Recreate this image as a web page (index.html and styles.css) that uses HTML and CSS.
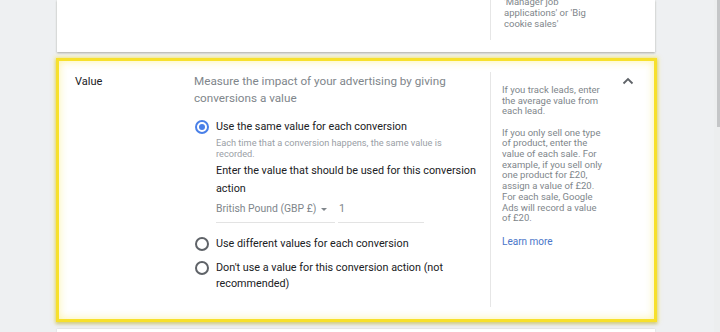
FILE: index.html
```html
<!DOCTYPE html>
<html>
<head>
<meta charset="utf-8">
<link rel="stylesheet" href="styles.css">
</head>
<body>
<div class="page">
  <div class="content">
    <div class="card top-card">
      <div class="top-main"></div>
      <div class="top-help">
        <p>'Manager job<br>applications' or 'Big<br>cookie sales'</p>
      </div>
    </div>
    <div class="card value-card">
      <div class="label">Value</div>
      <div class="main">
        <p class="desc">Measure the impact of your advertising by giving<br>conversions a value</p>
        <div class="option opt1">
          <span class="radio checked"></span>
          <span class="opt-label">Use the same value for each conversion</span>
        </div>
        <div class="indent">
          <p class="sub">Each time that a conversion happens, the same value is<br>recorded.</p>
          <p class="enter">Enter the value that should be used for this conversion<br>action</p>
          <div class="inputs">
            <div class="select">
              <span>British Pound (GBP £)</span>
              <span class="caret"></span>
            </div>
            <div class="amount">1</div>
          </div>
        </div>
        <div class="option opt2">
          <span class="radio"></span>
          <span class="opt-label">Use different values for each conversion</span>
        </div>
        <div class="option opt3">
          <span class="radio"></span>
          <span class="opt-label">Don't use a value for this conversion action (not<br>recommended)</span>
        </div>
      </div>
      <div class="help">
        <p>If you track leads, enter<br>the average value from<br>each lead.</p>
        <p class="p2">If you only sell one type<br>of product, enter the<br>value of each sale. For<br>example, if you sell only<br>one product for £20,<br>assign a value of £20.<br>For each sale, Google<br>Ads will record a value<br>of £20.</p>
        <a class="learn">Learn more</a>
      </div>
      <div class="toggle">
        <svg width="12" height="8" viewBox="0 0 12 8"><path d="M1.5 6.5 L6 2 L10.5 6.5" fill="none" stroke="#5f6368" stroke-width="1.8"/></svg>
      </div>
    </div>
    <div class="card next-card"></div>
  </div>
  <div class="scrollbar"><div class="thumb"></div></div>
</div>
</body>
</html>
```

FILE: styles.css
```css
html, body {
  margin: 0;
  padding: 0;
  height: 100%;
  overflow: hidden;
}
body {
  background: #eef0f2;
  font-family: Roboto, "Liberation Sans", Arial, sans-serif;
  color: #3c4043;
}
p { margin: 0; white-space: nowrap; }
.page {
  display: flex;
  height: 332px;
  overflow: hidden;
}
.content {
  flex: 1;
  padding-left: 57px;
  padding-right: 57px;
  display: flex;
  flex-direction: column;
}
.card {
  background: #fff;
  width: 598px;
  flex: none;
}
.top-card {
  height: 52px;
  display: flex;
  box-shadow: 0 1px 2px rgba(90, 90, 70, 0.45);
  overflow: hidden;
}
.top-main { width: 433px; }
.top-help {
  border-left: 1px solid #e6e6e6;
  margin-bottom: 12px;
  padding-left: 13px;
  padding-bottom: 11px;
  display: flex;
  flex-direction: column;
  justify-content: flex-end;
  font-size: 9.5px;
  line-height: 11px;
  color: #80868b;
}
.value-card {
  margin-top: 6px;
  margin-left: -1px;
  width: 595px;
  border: 3px solid #f7e02c;
  box-shadow: 0 0 4px 1px rgba(250, 228, 40, 0.55), inset 0 0 9px rgba(250, 232, 80, 0.5), 0 2px 3px rgba(60, 60, 0, 0.25);
  display: flex;
  height: 258px;
}
.label {
  width: 119px;
  flex: none;
  padding-left: 16px;
  padding-top: 12px;
  font-size: 11px;
  line-height: 17px;
  color: #202124;
}
.main {
  width: 296px;
  flex: none;
  padding-top: 12px;
  font-size: 10.8px;
}
.desc {
  font-size: 11.7px;
  line-height: 17px;
  color: #80868b;
}
.option {
  display: flex;
  align-items: flex-start;
  padding-left: 1px;
}
.opt1 { margin-top: 12px; }
.opt2 { margin-top: 13px; }
.opt3 { margin-top: 8px; }
.opt-label {
  margin-left: 7px;
  line-height: 16px;
  color: #202124;
  white-space: nowrap;
}
.radio {
  width: 10px;
  height: 10px;
  border: 2px solid #5f6368;
  border-radius: 50%;
  margin-top: 1px;
  flex: none;
  position: relative;
}
.radio.checked {
  border-color: #4a80e8;
}
.radio.checked::after {
  content: "";
  position: absolute;
  left: 2px;
  top: 2px;
  width: 6px;
  height: 6px;
  border-radius: 50%;
  background: #4a80e8;
}
.indent { padding-left: 22px; }
.sub {
  margin-top: 1.5px;
  font-size: 9.2px;
  line-height: 11px;
  color: #9aa0a6;
}
.enter {
  margin-top: 3.5px;
  line-height: 18px;
  color: #202124;
}
.inputs {
  display: flex;
  margin-top: 3px;
  gap: 3px;
}
.select, .amount {
  border-bottom: 1px solid #e3e3e3;
  line-height: 16px;
  padding-bottom: 5px;
  color: #80868b;
  white-space: nowrap;
}
.select {
  width: 119px;
  display: flex;
  align-items: center;
  font-size: 10.4px;
}
.caret {
  margin-left: 5px;
  width: 0;
  height: 0;
  border-left: 3.5px solid transparent;
  border-right: 3.5px solid transparent;
  border-top: 3.5px solid #80868b;
}
.amount {
  width: 85px;
  padding-left: 1px;
}
.help {
  margin-top: 11px;
  margin-bottom: 12px;
  border-left: 1px solid #e6e6e6;
  padding-left: 11px;
  padding-top: 13px;
  width: 100px;
  flex: none;
  font-size: 9.5px;
  line-height: 10.7px;
  color: #80868b;
}
.p2 { margin-top: 10.5px; }
.learn {
  display: block;
  margin-top: 13.5px;
  color: #4a76c9;
  font-size: 10px;
}
.toggle {
  padding-left: 20px;
  padding-top: 9px;
}
.next-card {
  margin-top: 7px;
  height: 3px;
  box-shadow: 0 0 2px rgba(0, 0, 0, 0.15);
}
.scrollbar {
  width: 7px;
  background: #eceeef;
  flex: none;
}
.thumb {
  margin-left: 3px;
  height: 127px;
  background: #c4c6c8;
}
```
